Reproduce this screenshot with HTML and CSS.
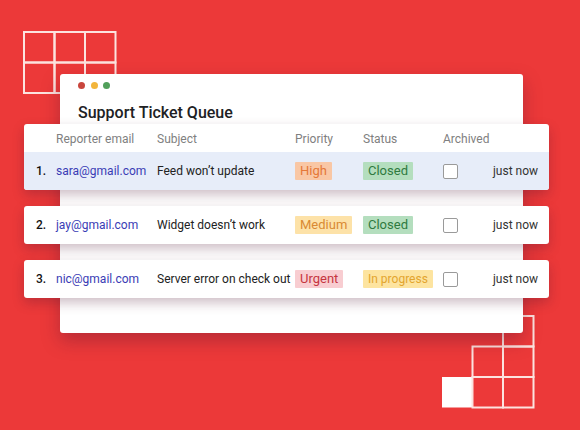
FILE: index.html
```html
<!DOCTYPE html>
<html>
<head>
<meta charset="utf-8">
<link rel="stylesheet" href="styles.css">
</head>
<body>
<div class="stage">
  <svg class="grid grid-tl" width="96" height="66" viewBox="0 0 96 66">
    <g fill="none" stroke="#fce3df" stroke-width="2">
      <rect x="1" y="1" width="30.5" height="30.5"/>
      <rect x="31.5" y="1" width="30.5" height="30.5"/>
      <rect x="62" y="1" width="30.5" height="30.5"/>
      <rect x="1" y="31.5" width="30.5" height="30.5"/>
      <rect x="31.5" y="31.5" width="30.5" height="30.5"/>
      <rect x="62" y="31.5" width="30.5" height="30.5"/>
    </g>
  </svg>
  <svg class="grid grid-br" width="96" height="96" viewBox="0 0 96 96">
    <rect x="1" y="62" width="30.5" height="30.5" fill="#ffffff"/>
    <g fill="none" stroke="#fce3df" stroke-width="2">
      <rect x="62" y="1" width="30.5" height="30.5"/>
      <rect x="31.5" y="31.5" width="30.5" height="30.5"/>
      <rect x="62" y="31.5" width="30.5" height="30.5"/>
      <rect x="31.5" y="62" width="30.5" height="30.5"/>
      <rect x="62" y="62" width="30.5" height="30.5"/>
    </g>
  </svg>

  <div class="window">
    <div class="dots">
      <span class="dot dot-red"></span>
      <span class="dot dot-yellow"></span>
      <span class="dot dot-green"></span>
    </div>
    <h1 class="title">Support Ticket Queue</h1>

    <div class="table">
      <div class="card card-first">
        <div class="row head">
          <span></span>
          <span>Reporter email</span>
          <span>Subject</span>
          <span>Priority</span>
          <span>Status</span>
          <span>Archived</span>
          <span></span>
        </div>
        <div class="row item selected">
          <span class="num">1.</span>
          <span class="email">sara@gmail.com</span>
          <span class="subject">Feed won’t update</span>
          <span><span class="badge b-high">High</span></span>
          <span><span class="badge b-closed">Closed</span></span>
          <span><span class="check"></span></span>
          <span class="time">just now</span>
        </div>
      </div>

      <div class="card">
        <div class="row item">
          <span class="num">2.</span>
          <span class="email">jay@gmail.com</span>
          <span class="subject">Widget doesn’t work</span>
          <span><span class="badge b-medium">Medium</span></span>
          <span><span class="badge b-closed">Closed</span></span>
          <span><span class="check"></span></span>
          <span class="time">just now</span>
        </div>
      </div>

      <div class="card">
        <div class="row item">
          <span class="num">3.</span>
          <span class="email">nic@gmail.com</span>
          <span class="subject">Server error on check out</span>
          <span><span class="badge b-urgent">Urgent</span></span>
          <span><span class="badge b-progress">In progress</span></span>
          <span><span class="check"></span></span>
          <span class="time">just now</span>
        </div>
      </div>
    </div>
  </div>
</div>
</body>
</html>
```

FILE: styles.css
```css
* { box-sizing: border-box; }

html, body {
  margin: 0;
  padding: 0;
}

body {
  width: 580px;
  height: 430px;
  overflow: hidden;
  background: #ec3939;
  font-family: Roboto, "Liberation Sans", sans-serif;
  color: #222;
}

.stage {
  position: relative;
  width: 580px;
  height: 430px;
  padding: 74px 0 0 60px;
}

.grid {
  position: absolute;
  display: block;
}

.grid-tl {
  left: 23px;
  top: 31px;
}

.grid-br {
  left: 441px;
  top: 315px;
}

.window {
  position: relative;
  width: 463px;
  height: 259px;
  background: #ffffff;
  border-radius: 3px;
  padding-top: 8px;
  box-shadow: 0 8px 18px rgba(90, 20, 50, 0.35);
}

.dots {
  display: flex;
  gap: 5.5px;
  padding-left: 18px;
}

.dot {
  width: 7px;
  height: 7px;
  border-radius: 50%;
}

.dot-red { background: #c9463d; }
.dot-yellow { background: #f2b53c; }
.dot-green { background: #51a05b; }

.title {
  margin: 14px 0 1px 18px;
  font-size: 16px;
  line-height: 20px;
  font-weight: 500;
  color: #202124;
}

.table {
  margin: 0 -26px 0 -36px;
  display: flex;
  flex-direction: column;
  gap: 16px;
}

.card {
  background: #ffffff;
  border-radius: 3px;
  overflow: hidden;
  box-shadow: 0 5px 12px rgba(80, 20, 50, 0.28);
}

.row {
  display: grid;
  grid-template-columns: 20px 101px 138px 68px 80px 50px 1fr;
  align-items: center;
  padding-left: 12px;
  font-size: 12px;
  white-space: nowrap;
}

.head {
  height: 28px;
  padding-top: 2px;
  color: #808080;
}

.item {
  height: 38px;
}

.selected {
  background: #e7edf9;
}

.num {
  font-weight: 500;
  color: #111;
}

.email {
  color: #3a3cb5;
}

.subject {
  color: #222;
}

.time {
  color: #333;
}

.badge {
  display: inline-block;
  height: 18px;
  line-height: 18px;
  padding: 0 5px;
  border-radius: 1px;
  font-size: 13px;
}

.b-high { background: #f9c7a5; color: #e57838; }
.b-closed { background: #b4debe; color: #2f7a40; }
.b-medium { background: #fde2a8; color: #d98a33; }
.b-urgent { background: #f8cdd1; color: #c6363f; }
.b-progress { background: #fde4a0; color: #e3a42e; font-size: 12px; }

.check {
  display: block;
  width: 15px;
  height: 15px;
  border: 1px solid #9a9a9a;
  border-radius: 2px;
  background: #fff;
}
```
